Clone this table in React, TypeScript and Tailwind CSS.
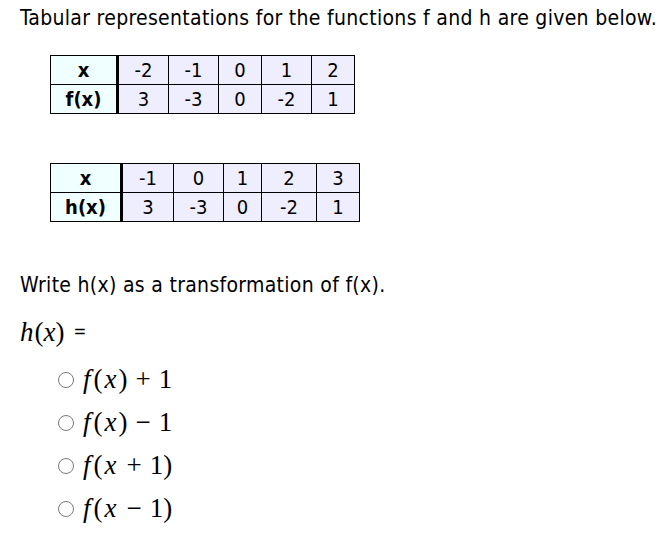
import React from 'react'

const TABLES = [
  {
    fn: 'f(x)',
    xs: ['-2', '-1', '0', '1', '2'],
    ys: ['3', '-3', '0', '-2', '1'],
    labelW: 'w-[67px]',
    widths: ['w-[51px]', 'w-[50px]', 'w-[43px]', 'w-[50px]', 'w-[43px]'],
  },
  {
    fn: 'h(x)',
    xs: ['-1', '0', '1', '2', '3'],
    ys: ['3', '-3', '0', '-2', '1'],
    labelW: 'w-[71px]',
    widths: ['w-[52px]', 'w-[50px]', 'w-[38px]', 'w-[55px]', 'w-[43px]'],
  },
]

function ValueTable({ t }: { t: (typeof TABLES)[number] }) {
  return (
    <table className="border-collapse border border-black text-[20px] leading-none">
      <tbody>
        <tr className="h-[29px]">
          <td className={`${t.labelW} bg-[#f0ffff] border border-black border-r-[3px] text-center font-bold`}>x</td>
          {t.xs.map((v, i) => (
            <td key={i} className={`${t.widths[i]} bg-[#eeeeff] border border-black text-center`}>{v}</td>
          ))}
        </tr>
        <tr className="h-[29px]">
          <td className={`${t.labelW} bg-[#f0ffff] border border-black border-r-[3px] text-center font-bold`}>{t.fn}</td>
          {t.ys.map((v, i) => (
            <td key={i} className={`${t.widths[i]} bg-[#eeeeff] border border-black text-center`}>{v}</td>
          ))}
        </tr>
      </tbody>
    </table>
  )
}

function Radio() {
  return <span className="inline-block w-[16px] h-[16px] rounded-full border-[1.5px] border-[#7a7a7a] bg-white mr-[9px]" />
}

// math pieces, KaTeX-ish spacing
const F = () => <span className="italic mr-[3px]">f</span>
const X = () => <span className="italic px-[2px]">x</span>
const Op = ({ c }: { c: string }) => <span className="mx-[8px]">{c}</span>

function MathExpr({ idx }: { idx: number }) {
  if (idx === 0)
    return (
      <span>
        <F />(<X />)<Op c="+" />1
      </span>
    )
  if (idx === 1)
    return (
      <span>
        <F />(<X />)<Op c="−" />1
      </span>
    )
  if (idx === 2)
    return (
      <span>
        <F />(<X /><Op c="+" />1)
      </span>
    )
  return (
    <span>
      <F />(<X /><Op c="−" />1)
    </span>
  )
}

const OPTIONS = [0, 1, 2, 3]

export default function App() {
  return (
    <div className="bg-white min-h-[542px] pl-5 pt-[5px] text-[21px] tracking-[0.3px] text-black font-['DejaVu_Sans_Condensed','DejaVu_Sans',sans-serif]">
      <p className="leading-[26px]">Tabular representations for the functions f and h are given below.</p>

      <div className="ml-[30px] mt-[24px] tracking-normal">
        <ValueTable t={TABLES[0]} />
      </div>
      <div className="ml-[30px] mt-[49px] tracking-normal">
        <ValueTable t={TABLES[1]} />
      </div>

      <p className="mt-[50px] leading-[26px]">Write h(x) as a transformation of f(x).</p>

      <div className="mt-[16px] flex items-center h-[36px] tracking-normal">
        <span className="font-['Liberation_Serif',serif] text-[27px]">
          <span className="italic mr-[1px]">h</span>(<span className="italic">x</span>)
        </span>
        <span className="ml-[9px] text-[17px]">=</span>
      </div>

      <div className="ml-[38px] mt-[8px] flex flex-col tracking-normal">
        {OPTIONS.map((idx) => (
          <div key={idx} className="flex items-center h-[43px]">
            <Radio />
            <span className="font-['Liberation_Serif',serif] text-[27px]">
              <MathExpr idx={idx} />
            </span>
          </div>
        ))}
      </div>
    </div>
  )
}
